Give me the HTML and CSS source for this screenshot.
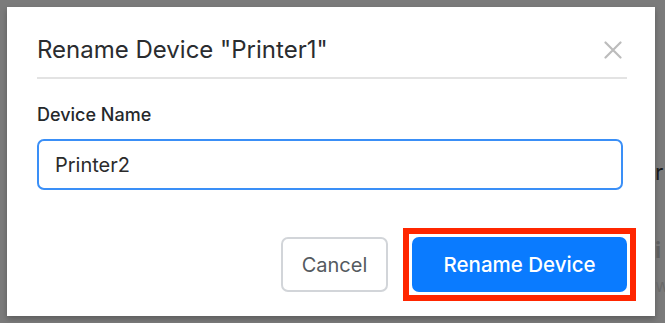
FILE: index.html
```html
<!DOCTYPE html>
<html lang="en">

<head>
  <meta charset="UTF-8">
  <meta name="viewport" content="width=device-width, initial-scale=1.0">
  <title>Rename Device</title>
  <link rel="stylesheet" href="styles.css">
</head>

<body>
  <div class="backdrop">
    <div class="modal">
      <div class="modal-header">
        <h5 class="modal-title">Rename Device "Printer1"</h5>
        <button type="button" class="close" aria-label="Close">
          <svg width="18" height="18" viewBox="0 0 18 18">
            <path d="M1.5 1.5 L16.5 16.5 M16.5 1.5 L1.5 16.5" stroke="#bcbcbc" stroke-width="2.2" stroke-linecap="round" fill="none"/>
          </svg>
        </button>
      </div>
      <div class="modal-body">
        <label for="name" class="label">Device Name</label>
        <input type="text" id="name" class="input" value="Printer2">
      </div>
      <div class="modal-footer">
        <button type="button" class="btn btn-cancel">Cancel</button>
        <span class="highlight">
          <button type="submit" class="btn btn-primary">Rename Device</button>
        </span>
      </div>
    </div>

    <!-- bits of the page behind the dialog -->
    <div class="peek">
      <span class="peek-r">r</span>
      <span class="peek-i">i</span>
      <span class="peek-w">w</span>
    </div>
  </div>
</body>

</html>
```

FILE: styles.css
```css
body {
  font-family: 'Inter', 'Roboto', 'Liberation Sans', sans-serif;
  background-color: #7b7b7b;
  margin: 0;
  padding: 0;
  width: 665px;
  height: 323px;
  overflow: hidden;
}

.backdrop {
  display: flex;
  align-items: flex-start;
}

.modal {
  background-color: #ffffff;
  margin: 7px 0 0 7px;
  width: 648px;
  height: 309px;
  box-shadow: 0 3px 6px rgba(0, 0, 0, 0.25);
  display: flex;
  flex-direction: column;
  flex-shrink: 0;
}

.modal-header {
  display: flex;
  align-items: center;
  justify-content: space-between;
  margin: 0 28px 0 30px;
  padding: 29px 0 13px;
  border-bottom: 2px solid #e3e3e3;
}

.modal-title {
  margin: 0;
  font-size: 24px;
  line-height: 28px;
  font-weight: 400;
  color: #2a2c2f;
}

.close {
  background: none;
  border: none;
  padding: 0;
  margin-right: 5px;
  width: 18px;
  height: 18px;
  cursor: pointer;
}

.close svg {
  display: block;
}

.modal-body {
  display: flex;
  flex-direction: column;
  padding: 25px 32px 0 30px;
}

.label {
  font-size: 18px;
  line-height: 22px;
  font-weight: 500;
  color: #25282b;
  margin-bottom: 13px;
}

.input {
  box-sizing: border-box;
  height: 51px;
  width: 100%;
  padding: 0 16px;
  border: 2px solid #3a8ff7;
  border-radius: 7px;
  font-family: inherit;
  font-size: 20px;
  color: #2b2b2b;
  outline: none;
}

.modal-footer {
  display: flex;
  align-items: center;
  justify-content: flex-end;
  gap: 15px;
  padding: 38px 19px 0 0;
}

.btn {
  box-sizing: border-box;
  height: 55px;
  border-radius: 7px;
  font-family: inherit;
  font-size: 20px;
  cursor: pointer;
}

.btn-cancel {
  width: 107px;
  background-color: #ffffff;
  border: 2px solid #d2d5d9;
  color: #555a5f;
}

/* red box drawn round the main action */
.highlight {
  display: block;
  border: 6px solid #ff2600;
  padding: 3px;
}

.btn-primary {
  display: block;
  width: 215px;
  background-color: #0a7bff;
  border: none;
  color: #ffffff;
  font-weight: 500;
  font-size: 20.5px;
}

.peek {
  display: flex;
  flex-direction: column;
  width: 10px;
  overflow: hidden;
  padding: 158px 0 0 0;
  font-size: 22px;
}

.peek-r {
  color: #1a1a1a;
  line-height: 28px;
}

.peek-i {
  color: #5e5e5e;
  font-weight: 700;
  line-height: 28px;
  margin-top: 50px;
}

.peek-w {
  color: #6a6a6a;
  font-size: 18px;
  line-height: 20px;
  margin-top: 12px;
}
```
